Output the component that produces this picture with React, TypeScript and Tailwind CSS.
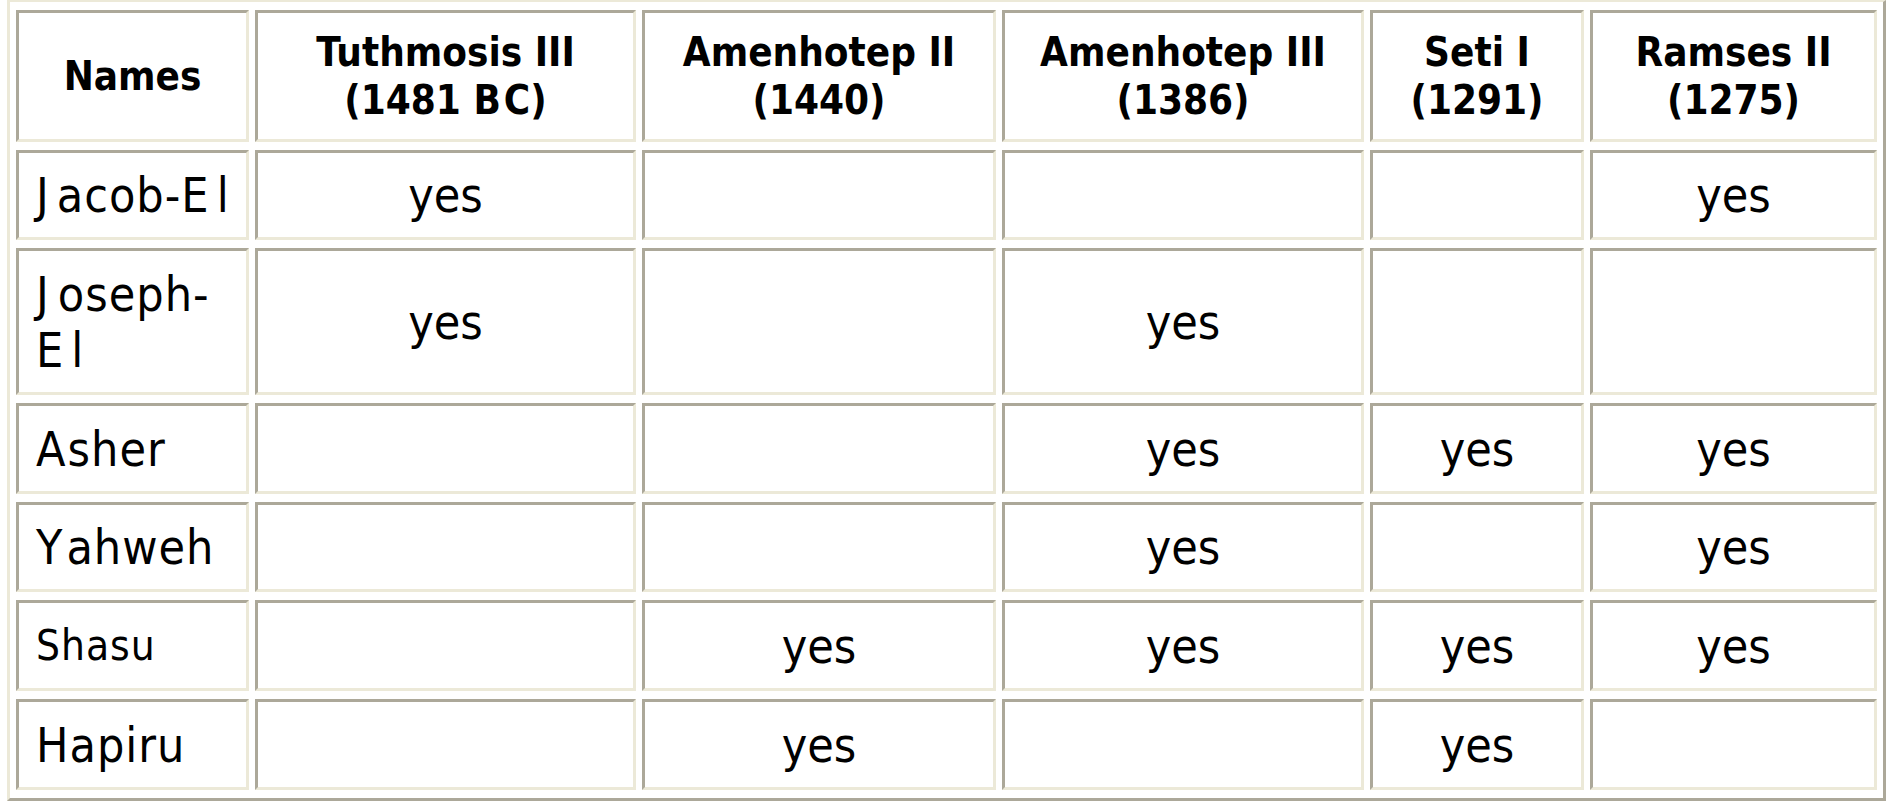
import React from "react";

const cellBorder =
  "border-[3px] border-t-[#aca899] border-l-[#aca899] border-b-[#ece9d8] border-r-[#ece9d8] bg-white";

const headers: { w: string; l1: React.ReactNode; l2?: React.ReactNode }[] = [
  { w: "w-[381px]", l1: "Tuthmosis III", l2: <>(1481 B<span className="ml-[3px]">C</span>)</> },
  { w: "w-[354px]", l1: "Amenhotep II", l2: "(1440)" },
  { w: "w-[362px]", l1: "Amenhotep III", l2: "(1386)" },
  { w: "w-[214px]", l1: "Seti I", l2: "(1291)" },
  { w: "w-[287px]", l1: "Ramses II", l2: "(1275)" },
];

type Row = { name: React.ReactNode; h: string; small?: boolean; cells: boolean[] };

const rows: Row[] = [
  {
    name: (
      <>
        <span className="mr-[7px]">J</span>acob-<span className="mr-[7px]">E</span>l
      </>
    ),
    h: "h-[90px]",
    cells: [true, false, false, false, true],
  },
  {
    name: (
      <>
        <span className="mr-[8px]">J</span>oseph-
        <br />
        <span className="mr-[7px]">E</span>l
      </>
    ),
    h: "h-[147px]",
    cells: [true, false, true, false, false],
  },
  { name: <>A<span className="ml-[1px]">sher</span></>, h: "h-[91px]", cells: [false, false, true, true, true] },
  { name: <><span className="mr-[3px]">Y</span>ahweh</>, h: "h-[90px]", cells: [false, false, true, false, true] },
  { name: "Shasu", h: "h-[91px]", small: true, cells: [false, true, true, true, true] },
  { name: "Hapiru", h: "h-[91px]", cells: [false, true, false, true, false] },
];

export default function App() {
  return (
    <div className="bg-white min-h-[806px] w-[1893px] font-['DejaVu_Sans_Condensed','DejaVu_Sans',sans-serif] text-black">
      <table className="ml-[7px] w-[1879px] border-separate border-spacing-x-[6px] border-spacing-y-[8px] border-[3px] border-t-2 border-t-[#ece9d8] border-l-[#ece9d8] border-b-[#aca899] border-r-[#aca899]">
        <thead>
          <tr>
            <th className={`${cellBorder} w-[233px] h-[132px] p-0 align-middle text-center font-bold text-[40px] leading-[48px]`}>
              Names
            </th>
            {headers.map((h, i) => (
              <th
                key={i}
                className={`${cellBorder} ${h.w} h-[132px] p-0 align-middle text-center font-bold text-[40px] leading-[48px]`}
              >
                {h.l1}
                <br />
                {h.l2}
              </th>
            ))}
          </tr>
        </thead>
        <tbody>
          {rows.map((r, i) => (
            <tr key={i}>
              <td
                className={`${cellBorder} ${r.h} py-0 pl-[17px] pr-0 align-middle text-left tracking-[1px] ${
                  r.small ? "text-[42px]" : "text-[48px]"
                } leading-[56px]`}
              >
                {r.name}
              </td>
              {r.cells.map((c, j) => (
                <td key={j} className={`${cellBorder} ${r.h} p-0 align-middle text-center text-[48px] leading-[56px]`}>
                  {c ? "yes" : ""}
                </td>
              ))}
            </tr>
          ))}
        </tbody>
      </table>
    </div>
  );
}
